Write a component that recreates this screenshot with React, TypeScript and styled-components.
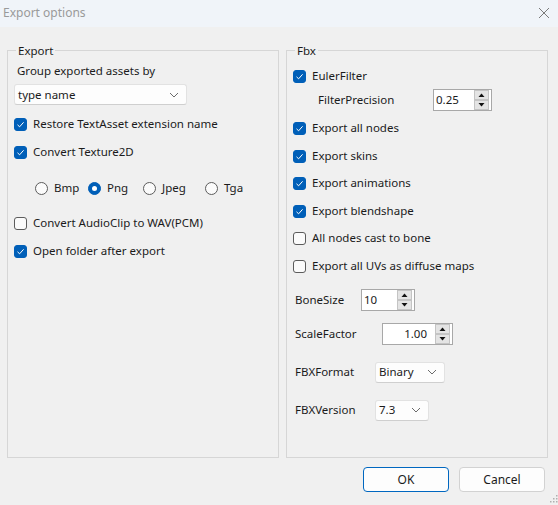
import React from 'react';
import styled, { createGlobalStyle } from 'styled-components';

const GlobalStyle = createGlobalStyle`
  html, body { margin: 0; padding: 0; background: #f0f0f0; }
  body { font-family: "Noto Sans", "Liberation Sans", sans-serif; font-size: 11.5px; color: #1b1b1b; }
`;

const Window = styled.div`
  width: 558px;
  height: 505px;
  background: #f0f0f0;
  display: flex;
  flex-direction: column;
  overflow: hidden;
`;

const TitleBar = styled.div`
  height: 27px;
  background: #f0f4f9;
  display: flex;
  align-items: center;
  justify-content: space-between;
  padding: 0 8px 0 3px;
`;

const Title = styled.span`
  color: #9a9a9a;
  font-size: 12px;
  line-height: 16px;
  margin-top: -1px;
`;

const Body = styled.div`
  display: flex;
  gap: 7px;
  padding: 23px 0 0 7px;
`;

const Group = styled.div<{ $w: number }>`
  width: ${p => p.$w}px;
  height: 408px;
  box-sizing: border-box;
  border: 1px solid #d6d6d6;
  display: flex;
  flex-direction: column;
  align-items: flex-start;
  padding: 0 6px;
`;

const Legend = styled.span`
  margin: -8px 0 0 2px;
  padding: 0 2px;
  background: #f0f0f0;
  line-height: 16px;
`;

const Row = styled.div<{ $mt: number; $h?: number; $ml?: number }>`
  display: flex;
  align-items: center;
  margin-top: ${p => p.$mt}px;
  margin-left: ${p => p.$ml ?? 0}px;
  height: ${p => p.$h ?? 16}px;
  line-height: 16px;
  white-space: nowrap;
`;

const Label = styled.span<{ $w?: number; $ml?: number }>`
  display: inline-block;
  width: ${p => (p.$w ? `${p.$w}px` : 'auto')};
  margin-left: ${p => p.$ml ?? 0}px;
`;

const Box = styled.span<{ $on: boolean }>`
  width: 13px;
  height: 13px;
  box-sizing: border-box;
  border-radius: 3px;
  margin-right: 6px;
  display: inline-flex;
  align-items: center;
  justify-content: center;
  background: ${p => (p.$on ? '#005fb8' : '#fbfbfb')};
  border: 1px solid ${p => (p.$on ? '#005fb8' : '#5c5c5c')};
`;

const RadioItem = styled.span<{ $w: number }>`
  display: inline-flex;
  align-items: center;
  width: ${p => p.$w}px;
`;

const RadioDot = styled.span<{ $on: boolean }>`
  width: 13px;
  height: 13px;
  box-sizing: border-box;
  border-radius: 50%;
  margin-right: 6px;
  background: ${p => (p.$on ? '#005fb8' : '#fbfbfb')};
  border: 1px solid ${p => (p.$on ? '#005fb8' : '#5c5c5c')};
  display: inline-flex;
  align-items: center;
  justify-content: center;
  &::after {
    content: '';
    display: ${p => (p.$on ? 'block' : 'none')};
    width: 5px;
    height: 5px;
    border-radius: 50%;
    background: #fff;
  }
`;

const Combo = styled.div<{ $w: number; $mt?: number }>`
  width: ${p => p.$w}px;
  height: 21px;
  margin-top: ${p => p.$mt ?? 0}px;
  box-sizing: border-box;
  background: #fdfdfd;
  border: 1px solid #e2e2e2;
  border-bottom-color: #cfcfcf;
  border-radius: 3px;
  display: flex;
  align-items: center;
  justify-content: space-between;
  padding: 0 7px 0 3px;
`;

const Spin = styled.div<{ $w: number; $align?: string }>`
  width: ${p => p.$w}px;
  height: 22px;
  box-sizing: border-box;
  background: #fff;
  border: 1px solid #a8a8a8;
  display: flex;
  align-items: center;
  padding: 0 2px 0 2px;
  span {
    flex: 1;
    text-align: ${p => p.$align ?? 'left'};
    padding-right: ${p => (p.$align === 'right' ? '8px' : '0')};
  }
`;

const SpinButtons = styled.div`
  display: flex;
  flex-direction: column;
  width: 15px;
`;

const SpinBtn = styled.div`
  height: 8px;
  background: #e4e4e4;
  border: 1px solid #c4c4c4;
  display: flex;
  align-items: center;
  justify-content: center;
`;

const Footer = styled.div`
  display: flex;
  justify-content: flex-end;
  gap: 10px;
  padding: 9px 13px 0 0;
  position: relative;
`;

const Button = styled.button<{ $primary?: boolean }>`
  width: 86px;
  height: 25px;
  font: inherit;
  font-size: 12px;
  color: #1b1b1b;
  background: #fdfdfd;
  border: 1px solid ${p => (p.$primary ? '#0067c0' : '#d2d2d2')};
  border-radius: 4px;
  padding: 0;
`;

const Grip = styled.svg`
  position: absolute;
  right: 0;
  bottom: -11px;
`;

const Check = () => (
  <svg width="9" height="9" viewBox="0 0 9 9">
    <path d="M1.5 4.8 L3.6 6.8 L7.6 2.3" fill="none" stroke="#fff" strokeWidth="1" />
  </svg>
);

const CheckRow = ({ on, text, mt }: { on: boolean; text: string; mt: number }) => (
  <Row $mt={mt}>
    <Box $on={on}>{on && <Check />}</Box>
    <span>{text}</span>
  </Row>
);

const Chevron = () => (
  <svg width="10" height="6" viewBox="0 0 10 6">
    <path d="M1 1 L5 5 L9 1" fill="none" stroke="#6b6b6b" strokeWidth="1" />
  </svg>
);

const Arrow = ({ up }: { up?: boolean }) => (
  <svg width="7" height="4" viewBox="0 0 7 4">
    <path d={up ? 'M0.5 4 L3.5 0.5 L6.5 4 Z' : 'M0.5 0 L3.5 3.5 L6.5 0 Z'} fill="#111" />
  </svg>
);

const Spinner = ({ value, w, align }: { value: string; w: number; align?: string }) => (
  <Spin $w={w} $align={align}>
    <span>{value}</span>
    <SpinButtons>
      <SpinBtn><Arrow up /></SpinBtn>
      <SpinBtn><Arrow /></SpinBtn>
    </SpinButtons>
  </Spin>
);

const radios = [
  { name: 'Bmp', w: 53, on: false },
  { name: 'Png', w: 55, on: true },
  { name: 'Jpeg', w: 62, on: false },
  { name: 'Tga', w: 50, on: false },
];

export default function App() {
  return (
    <>
      <GlobalStyle />
      <Window>
        <TitleBar>
          <Title>Export options</Title>
          <svg width="12" height="12" viewBox="0 0 12 12" style={{ marginTop: -1 }}>
            <path d="M1 1 L11 11 M11 1 L1 11" stroke="#7a7a7a" strokeWidth="1" />
          </svg>
        </TitleBar>
        <Body>
          <Group $w={272}>
            <Legend>Export</Legend>
            <Row $mt={4} $ml={3}>Group exported assets by</Row>
            <Combo $w={173} $mt={5}>
              <span>type name</span>
              <Chevron />
            </Combo>
            <CheckRow on mt={11} text="Restore TextAsset extension name" />
            <CheckRow on mt={12} text="Convert Texture2D" />
            <Row $mt={20} $ml={21}>
              {radios.map(r => (
                <RadioItem key={r.name} $w={r.w}>
                  <RadioDot $on={r.on} />
                  {r.name}
                </RadioItem>
              ))}
            </Row>
            <CheckRow on={false} mt={19} text="Convert AudioClip to WAV(PCM)" />
            <CheckRow on mt={12} text="Open folder after export" />
          </Group>
          <Group $w={262}>
            <Legend>Fbx</Legend>
            <CheckRow on mt={9} text="EulerFilter" />
            <Row $mt={5} $h={22}>
              <Label $ml={25} $w={115}>FilterPrecision</Label>
              <Spinner value="0.25" w={59} />
            </Row>
            <CheckRow on mt={9} text="Export all nodes" />
            <CheckRow on mt={12} text="Export skins" />
            <CheckRow on mt={11} text="Export animations" />
            <CheckRow on mt={12} text="Export blendshape" />
            <CheckRow on={false} mt={11} text="All nodes cast to bone" />
            <CheckRow on={false} mt={12} text="Export all UVs as diffuse maps" />
            <Row $mt={15} $h={22}>
              <Label $ml={2} $w={66}>BoneSize</Label>
              <Spinner value="10" w={54} />
            </Row>
            <Row $mt={12} $h={22}>
              <Label $ml={2} $w={87}>ScaleFactor</Label>
              <Spinner value="1.00" w={71} align="right" />
            </Row>
            <Row $mt={16} $h={22}>
              <Label $ml={2} $w={80}>FBXFormat</Label>
              <Combo $w={70}>
                <span>Binary</span>
                <Chevron />
              </Combo>
            </Row>
            <Row $mt={16} $h={22}>
              <Label $ml={2} $w={80}>FBXVersion</Label>
              <Combo $w={54}>
                <span>7.3</span>
                <Chevron />
              </Combo>
            </Row>
          </Group>
        </Body>
        <Footer>
          <Button $primary>OK</Button>
          <Button>Cancel</Button>
          <Grip width="8" height="8" viewBox="0 0 8 8">
            <rect x="6" y="0" width="1.5" height="1.5" fill="#b0b0b0" />
            <rect x="3" y="3" width="1.5" height="1.5" fill="#b0b0b0" />
            <rect x="6" y="3" width="1.5" height="1.5" fill="#b0b0b0" />
            <rect x="0" y="6" width="1.5" height="1.5" fill="#b0b0b0" />
            <rect x="3" y="6" width="1.5" height="1.5" fill="#b0b0b0" />
            <rect x="6" y="6" width="1.5" height="1.5" fill="#b0b0b0" />
          </Grip>
        </Footer>
      </Window>
    </>
  );
}
